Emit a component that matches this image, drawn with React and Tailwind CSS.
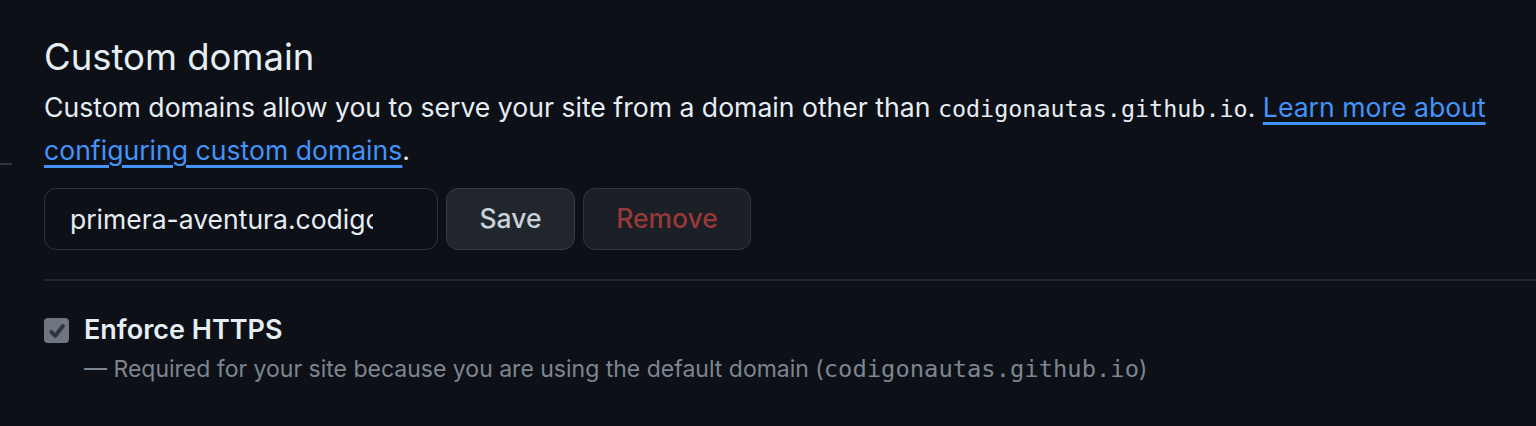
export default function App() {
  const sans = { fontFamily: "Inter, 'Noto Sans', sans-serif" };
  const mono = "font-['DejaVu_Sans_Mono',monospace]";

  return (
    <div className="w-full h-[426px] bg-[#0d1117] flex overflow-hidden" style={sans}>
      {/* sidebar edge */}
      <div className="w-[12px] shrink-0">
        <div className="mt-[163px] h-[2px] bg-[#30363d]"></div>
      </div>

      <div className="flex-1 pl-[32px] pt-[34px]">
        <h2 className="text-[36.5px] leading-[47px] text-[#e6edf3] font-normal">Custom domain</h2>
        <p className="mt-[6px] max-w-[1460px] text-[26.6px] leading-[41px] text-[#e6edf3]">
          Custom domains allow you to serve your site from a domain other than{" "}
          <code className={`${mono} text-[23.4px]`}>codigonautas.github.io</code>.{" "}
          <a href="#" className="text-[#4493f8] underline decoration-[2.5px] underline-offset-[5px]">
            Learn more about configuring custom domains
          </a>
          .
        </p>

        <div className="mt-[17px] flex gap-[8px]">
          <input
            readOnly
            value="primera-aventura.codigonautas.github.io"
            className="w-[394px] h-[62px] pl-[25px] pr-[64px] rounded-[12px] border-[1.5px] border-[#30363d] bg-[#0d1117] text-[26.5px] text-[#e6edf3] outline-none"
            style={sans}
          />
          <button className="w-[129px] h-[62px] rounded-[12px] border-[1.5px] border-[#363b42] bg-[#21262d] text-[26.5px] font-medium text-[#c9d1d9]">
            Save
          </button>
          <button className="w-[168px] h-[62px] rounded-[12px] border-[1.5px] border-[#30363d] bg-[#1b1f26] text-[26.5px] font-medium text-[#983838]">
            Remove
          </button>
        </div>

        <div className="mt-[29px] h-[2px] bg-[#21262d]"></div>

        <div className="mt-[32px] flex gap-[15px]">
          <div className="mt-[5px] w-[25px] h-[25px] shrink-0 rounded-[4px] bg-[#6e7681] flex items-center justify-center">
            <svg viewBox="0 0 16 16" className="w-[22px] h-[22px]" fill="none" stroke="#30363d" strokeWidth="2.8" strokeLinecap="round" strokeLinejoin="round">
              <path d="M3.8 8.6l2.9 3 5.6-7.2" />
            </svg>
          </div>
          <div>
            <div className="text-[27px] leading-[34px] font-semibold text-[#e6edf3]">Enforce HTTPS</div>
            <div className="mt-[7px] text-[23px] leading-[30px] text-[#7d8590]">
              — Required for your site because you are using the default domain (
              <code className={`${mono} text-[23.8px]`}>codigonautas.github.io</code>)
            </div>
          </div>
        </div>
      </div>
    </div>
  );
}
